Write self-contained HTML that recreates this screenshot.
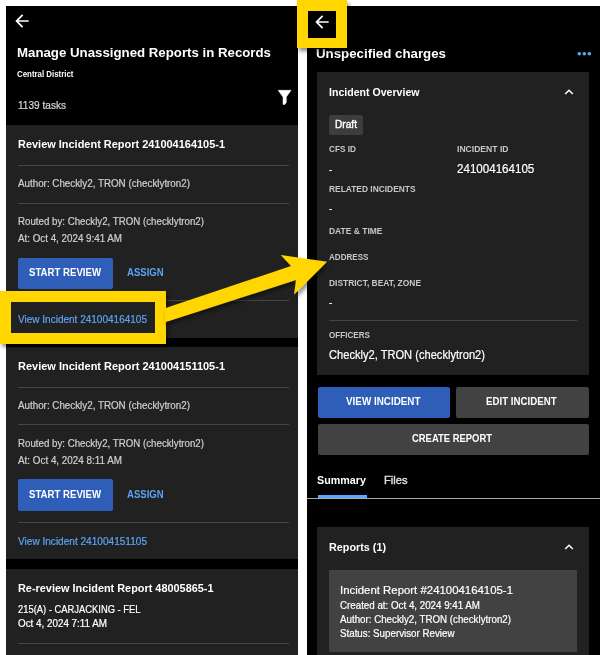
<!DOCTYPE html>
<html lang="en"><head><meta charset="utf-8"><title>Manage Unassigned Reports</title><style>
html,body{margin:0;padding:0}
body{width:600px;height:655px;overflow:hidden;background:#fff;position:relative;font-family:"Liberation Sans", Arial, sans-serif}
div,span,a,h1,h2,button,svg.a{position:absolute;display:block;margin:0;padding:0}
a{text-decoration:none}
button{border:0;font:inherit;text-align:left;cursor:pointer;overflow:visible}
.t{white-space:nowrap;transform-origin:0 50%;-webkit-text-stroke:.2px currentColor}
.hr{background:#454545}
.med{-webkit-text-stroke:.35px currentColor}
.b{-webkit-text-stroke:0}
.panel,.card{overflow:hidden}
</style></head><body>
<div class="panel" style="left:6.00px;top:6.00px;width:292.00px;height:649.00px;background:#000"><svg class="a" style="left:6.40px;top:4.50px" width="20" height="20" viewBox="0 0 24 24"><path fill="#fff" d="M20 11H7.83l5.59-5.59L12 4l-8 8 8 8 1.41-1.41L7.83 13H20v-2z"/></svg><h1 id="t0" class="t b" style="left:10.61px;top:39.00px;font-size:13px;line-height:16px;font-weight:700;color:#fff;transform:scaleX(1.0191);">Manage Unassigned Reports in Records</h1><span id="t1" class="t b" style="left:10.73px;top:63.00px;font-size:9px;line-height:11px;font-weight:700;color:#fff;transform:scaleX(0.8755);">Central District</span><span id="t2" class="t" style="left:12.20px;top:94.00px;font-size:10px;line-height:12px;font-weight:400;color:#d6d6d6;transform:scaleX(1.0079);">1139 tasks</span><svg class="a" style="left:271.00px;top:83.00px" width="16" height="18" viewBox="277 89 16 18"><path fill="#fff" stroke="#fff" stroke-width=".5" stroke-linejoin="round" d="M278.1 90.3 H291.1 L286.3 97 V102.4 L284.7 104.5 H283 V97 Z"/></svg><div class="card" style="left:0.00px;top:118.50px;width:292.00px;height:213.00px;background:#212121"><h2 id="t3" class="t b" style="left:11.67px;top:13.50px;font-size:11px;line-height:13px;font-weight:700;color:#fff;transform:scaleX(0.9957);">Review Incident Report 241004164105-1</h2><div class="hr" style="left:12.00px;top:40.50px;width:271.00px;height:1.00px;"></div><span id="t4" class="t" style="left:11.70px;top:53.50px;font-size:10px;line-height:12px;font-weight:400;color:#d0d0d0;transform:scaleX(0.9804);">Author: Checkly2, TRON (checklytron2)</span><div class="hr" style="left:12.00px;top:78.00px;width:271.00px;height:1.00px;"></div><span id="t5" class="t" style="left:11.70px;top:91.50px;font-size:10px;line-height:12px;font-weight:400;color:#d0d0d0;transform:scaleX(0.9710);">Routed by: Checkly2, TRON (checklytron2)</span><span id="t6" class="t" style="left:11.70px;top:108.50px;font-size:10px;line-height:12px;font-weight:400;color:#d0d0d0;transform:scaleX(0.9795);">At: Oct 4, 2024 9:41 AM</span><button class="btn" style="left:12.00px;top:133.00px;width:95.00px;height:31.50px;background:#2f5eb8;border-radius:2px"><span id="t7" class="t b" style="left:11.20px;top:9.50px;font-size:10px;line-height:12px;font-weight:700;color:#fff;transform:scaleX(0.9622);">START REVIEW</span></button><a href="#" id="t8" class="t b" style="left:121.00px;top:142.50px;font-size:10px;line-height:12px;font-weight:700;color:#5ca3f3;transform:scaleX(0.9571);">ASSIGN</a><div class="hr" style="left:12.00px;top:175.50px;width:271.00px;height:1.00px;"></div><a href="#" id="t9" class="t" style="left:11.70px;top:189.50px;font-size:10px;line-height:12px;font-weight:400;color:#5ca3f3;transform:scaleX(1.0013);">View Incident 241004164105</a></div><div class="card" style="left:0.00px;top:341.00px;width:292.00px;height:212.25px;background:#212121"><h2 id="t10" class="t b" style="left:11.67px;top:13.00px;font-size:11px;line-height:13px;font-weight:700;color:#fff;transform:scaleX(0.9986);">Review Incident Report 241004151105-1</h2><div class="hr" style="left:12.00px;top:39.75px;width:271.00px;height:1.00px;"></div><span id="t11" class="t" style="left:11.70px;top:53.00px;font-size:10px;line-height:12px;font-weight:400;color:#d0d0d0;transform:scaleX(0.9804);">Author: Checkly2, TRON (checklytron2)</span><div class="hr" style="left:12.00px;top:77.25px;width:271.00px;height:1.00px;"></div><span id="t12" class="t" style="left:11.70px;top:91.00px;font-size:10px;line-height:12px;font-weight:400;color:#d0d0d0;transform:scaleX(0.9710);">Routed by: Checkly2, TRON (checklytron2)</span><span id="t13" class="t" style="left:11.70px;top:108.00px;font-size:10px;line-height:12px;font-weight:400;color:#d0d0d0;transform:scaleX(0.9864);">At: Oct 4, 2024 8:11 AM</span><button class="btn" style="left:12.00px;top:132.25px;width:95.00px;height:31.50px;background:#2f5eb8;border-radius:2px"><span id="t14" class="t b" style="left:11.20px;top:9.75px;font-size:10px;line-height:12px;font-weight:700;color:#fff;transform:scaleX(0.9622);">START REVIEW</span></button><a href="#" id="t15" class="t b" style="left:121.00px;top:142.00px;font-size:10px;line-height:12px;font-weight:700;color:#5ca3f3;transform:scaleX(0.9571);">ASSIGN</a><div class="hr" style="left:12.00px;top:174.75px;width:271.00px;height:1.00px;"></div><a href="#" id="t16" class="t" style="left:11.70px;top:189.00px;font-size:10px;line-height:12px;font-weight:400;color:#5ca3f3;transform:scaleX(1.0072);">View Incident 241004151105</a></div><div class="card" style="left:0.00px;top:563.00px;width:292.00px;height:86.00px;background:#212121"><h2 id="t17" class="t b" style="left:11.67px;top:13.00px;font-size:11px;line-height:13px;font-weight:700;color:#fff;transform:scaleX(0.9900);">Re-review Incident Report 48005865-1</h2><span id="t18" class="t" style="left:11.70px;top:35.00px;font-size:10px;line-height:12px;font-weight:400;color:#fff;transform:scaleX(0.9380);">215(A) - CARJACKING - FEL</span><span id="t19" class="t" style="left:11.70px;top:49.00px;font-size:10px;line-height:12px;font-weight:400;color:#fff;transform:scaleX(0.9841);">Oct 4, 2024 7:11 AM</span><div class="hr" style="left:12.00px;top:74.00px;width:271.00px;height:1.00px;"></div></div></div>
<div class="panel" style="left:307.00px;top:6.00px;width:293.00px;height:649.00px;background:#000"><svg class="a" style="left:4.85px;top:6.00px" width="20" height="20" viewBox="0 0 24 24"><path fill="#fff" d="M20 11H7.83l5.59-5.59L12 4l-8 8 8 8 1.41-1.41L7.83 13H20v-2z"/></svg><h1 id="t20" class="t b" style="left:9.20px;top:40.00px;font-size:13.5px;line-height:16px;font-weight:700;color:#fff;transform:scaleX(0.9845);">Unspecified charges</h1><svg class="a" style="left:269.00px;top:43.50px" width="18" height="8" viewBox="576 49.5 18 8"><circle cx="579.25" cy="53.25" r="1.8" fill="#5aa8fa"/><circle cx="584.3" cy="53.25" r="1.8" fill="#5aa8fa"/><circle cx="589.35" cy="53.25" r="1.8" fill="#5aa8fa"/></svg><div class="card" style="left:10.00px;top:66.00px;width:271.60px;height:302.50px;background:#212121"><h2 id="t21" class="t b" style="left:11.92px;top:14.00px;font-size:11px;line-height:13px;font-weight:700;color:#fff;transform:scaleX(0.9612);">Incident Overview</h2><svg class="a" style="left:245.60px;top:16.00px" width="12" height="8" viewBox="562.6 88.00 12 8"><path d="M564.8 94.00 L568.6 90.30 L572.4 94.00" fill="none" stroke="#fff" stroke-width="1.55"/></svg><div class="chip" style="left:12.00px;top:43.00px;width:33.50px;height:19.50px;background:#3d3d3d;border-radius:2px"><span id="t22" class="t med" style="left:5.90px;top:4.00px;font-size:10px;line-height:12px;font-weight:400;color:#fff;transform:scaleX(1.0151);">Draft</span></div><span id="t23" class="t b" style="left:11.73px;top:72.00px;font-size:9px;line-height:11px;font-weight:700;color:#c4c8cc;transform:scaleX(0.9148);">CFS ID</span><span id="t24" class="t b" style="left:140.03px;top:72.00px;font-size:9px;line-height:11px;font-weight:700;color:#c4c8cc;transform:scaleX(0.9537);">INCIDENT ID</span><span id="t25" class="t" style="left:11.65px;top:90.00px;font-size:11.5px;line-height:14px;font-weight:400;color:#fff;transform:scaleX(0.8585);">-</span><span id="t26" class="t" style="left:139.94px;top:90.00px;font-size:12px;line-height:14px;font-weight:400;color:#fff;transform:scaleX(0.9651);">241004164105</span><span id="t27" class="t b" style="left:11.73px;top:112.00px;font-size:9px;line-height:11px;font-weight:700;color:#c4c8cc;transform:scaleX(0.9317);">RELATED INCIDENTS</span><span id="t28" class="t" style="left:11.65px;top:129.00px;font-size:11.5px;line-height:14px;font-weight:400;color:#fff;transform:scaleX(0.8585);">-</span><span id="t29" class="t b" style="left:11.73px;top:154.00px;font-size:9px;line-height:11px;font-weight:700;color:#c4c8cc;transform:scaleX(0.9412);">DATE &amp; TIME</span><span id="t30" class="t b" style="left:11.73px;top:180.00px;font-size:9px;line-height:11px;font-weight:700;color:#c4c8cc;transform:scaleX(0.8974);">ADDRESS</span><span id="t31" class="t b" style="left:11.73px;top:206.00px;font-size:9px;line-height:11px;font-weight:700;color:#c4c8cc;transform:scaleX(0.9355);">DISTRICT, BEAT, ZONE</span><span id="t32" class="t" style="left:11.65px;top:223.00px;font-size:11.5px;line-height:14px;font-weight:400;color:#fff;transform:scaleX(0.8585);">-</span><div class="hr" style="left:12.00px;top:247.50px;width:248.00px;height:1.00px;"></div><span id="t33" class="t b" style="left:11.73px;top:258.00px;font-size:9px;line-height:11px;font-weight:700;color:#c4c8cc;transform:scaleX(0.9008);">OFFICERS</span><span id="t34" class="t" style="left:11.64px;top:276.00px;font-size:12px;line-height:14px;font-weight:400;color:#fff;transform:scaleX(0.9258);">Checkly2, TRON (checklytron2)</span></div><button class="btn" style="left:10.50px;top:381.00px;width:132.50px;height:31.00px;background:#2f5eb8;border-radius:2px"><span id="t35" class="t b" style="left:28.45px;top:9.00px;font-size:10px;line-height:12px;font-weight:700;color:#fff;transform:scaleX(0.9859);">VIEW INCIDENT</span></button><button class="btn" style="left:149.00px;top:381.00px;width:132.50px;height:31.00px;background:#424242;border-radius:2px"><span id="t36" class="t b" style="left:30.40px;top:9.00px;font-size:10px;line-height:12px;font-weight:700;color:#fff;transform:scaleX(0.9700);">EDIT INCIDENT</span></button><button class="btn" style="left:10.50px;top:418.00px;width:271.00px;height:31.00px;background:#424242;border-radius:2px"><span id="t37" class="t b" style="left:94.70px;top:9.00px;font-size:10px;line-height:12px;font-weight:700;color:#fff;transform:scaleX(0.9431);">CREATE REPORT</span></button><span id="t38" class="t b" style="left:10.17px;top:468.00px;font-size:11px;line-height:13px;font-weight:700;color:#fff;transform:scaleX(0.9773);">Summary</span><span id="t39" class="t med" style="left:76.97px;top:468.00px;font-size:11px;line-height:13px;font-weight:400;color:#e2e2e2;transform:scaleX(1.0114);">Files</span><div class="ul" style="left:10.50px;top:489.00px;width:49.50px;height:3.00px;background:#5aa8fa"></div><div class="ln" style="left:0.00px;top:492.00px;width:293.00px;height:1.00px;background:#ababab"></div><div class="card" style="left:10.00px;top:521.00px;width:271.60px;height:128.00px;background:#212121"><h2 id="t40" class="t b" style="left:11.67px;top:14.00px;font-size:11px;line-height:13px;font-weight:700;color:#fff;transform:scaleX(0.9817);">Reports (1)</h2><svg class="a" style="left:245.60px;top:15.80px" width="12" height="8" viewBox="562.6 542.80 12 8"><path d="M564.8 548.80 L568.6 545.10 L572.4 548.80" fill="none" stroke="#fff" stroke-width="1.55"/></svg><div class="rep" style="left:12.00px;top:43.00px;width:248.00px;height:82.00px;background:#424242"><span id="t41" class="t" style="left:11.15px;top:13.00px;font-size:11.5px;line-height:14px;font-weight:400;color:#fff;transform:scaleX(0.9910);">Incident Report #241004164105-1</span><span id="t42" class="t" style="left:11.20px;top:30.00px;font-size:10px;line-height:12px;font-weight:400;color:#fff;transform:scaleX(0.9761);">Created at: Oct 4, 2024 9:41 AM</span><span id="t43" class="t" style="left:11.20px;top:44.00px;font-size:10px;line-height:12px;font-weight:400;color:#fff;transform:scaleX(0.9747);">Author: Checkly2, TRON (checklytron2)</span><span id="t44" class="t" style="left:11.20px;top:58.00px;font-size:10px;line-height:12px;font-weight:400;color:#fff;transform:scaleX(0.9763);">Status: Supervisor Review</span></div></div></div>
<div class="hl" style="left:296.80px;top:0.00px;width:50.20px;height:48.00px;border:solid #ffd600;border-width:11px 11px 10px 11px;box-sizing:border-box;box-shadow:2px 3px 4px rgba(0,0,0,.45)"></div>
<div class="hl" style="left:0.00px;top:291.00px;width:166.40px;height:53.00px;border:solid #ffd600;border-width:11px 11px 11px 11px;box-sizing:border-box;box-shadow:2px 3px 4px rgba(0,0,0,.45)"></div>
<svg class="a" style="left:0;top:0" width="600" height="655" viewBox="0 0 600 655"><defs><filter id="ds" x="-10%" y="-10%" width="130%" height="130%"><feDropShadow dx="2" dy="3" stdDeviation="2" flood-color="#000" flood-opacity=".45"/></filter></defs><path filter="url(#ds)" fill="#ffd600" d="M165 308.3 L291 266 L280.7 254.9 L327.1 261.7 L294 294.7 L296 280 L165 322.3 Z"/></svg>
</body></html>
